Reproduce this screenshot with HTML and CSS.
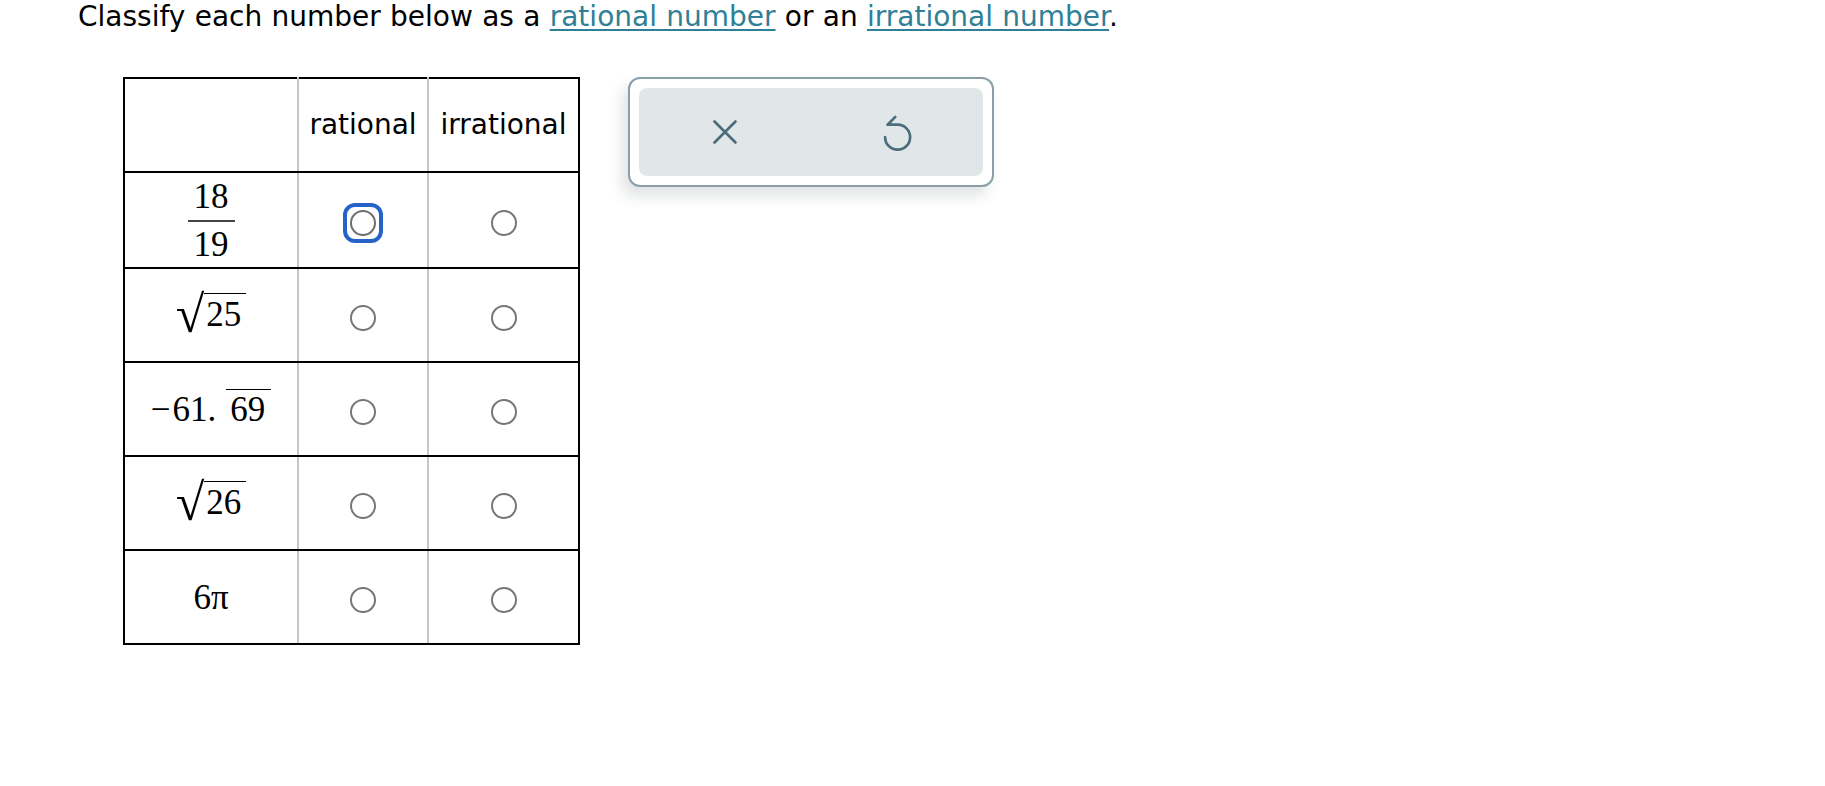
FILE: index.html
```html
<!DOCTYPE html>
<html lang="en">
<head>
    <meta charset="UTF-8">
    <meta name="viewport" content="width=device-width, initial-scale=1.0">
    <title>Rational or irrational</title>
    <link rel="stylesheet" href="styles.css">
</head>
<body>
    <!-- Enunciado -->
    <div class="prompt">
        Classify each number below as a <a href="#">rational number</a> or an <a href="#">irrational number</a>.
    </div>

    <div class="workspace">
        <!-- Tabla de clasificación -->
        <table class="classify">
            <colgroup>
                <col class="col-expr">
                <col class="col-opt">
                <col class="col-opt2">
            </colgroup>
            <tr>
                <th></th>
                <th>rational</th>
                <th>irrational</th>
            </tr>
            <tr class="tall">
                <td class="expr">
                    <span class="math frac">
                        <span class="num">18</span>
                        <span class="den">19</span>
                    </span>
                </td>
                <td><span class="focus-ring"><input type="radio" class="radio" name="q1"></span></td>
                <td><input type="radio" class="radio" name="q1"></td>
            </tr>
            <tr>
                <td class="expr">
                    <span class="math sqrt"><span class="radic">&#8730;</span><span class="radicand">25</span></span>
                </td>
                <td><input type="radio" class="radio" name="q2"></td>
                <td><input type="radio" class="radio" name="q2"></td>
            </tr>
            <tr>
                <td class="expr">
                    <span class="math"><span class="minus">&#8722;</span>61.<span class="rep">69</span></span>
                </td>
                <td><input type="radio" class="radio" name="q3"></td>
                <td><input type="radio" class="radio" name="q3"></td>
            </tr>
            <tr>
                <td class="expr">
                    <span class="math sqrt"><span class="radic">&#8730;</span><span class="radicand">26</span></span>
                </td>
                <td><input type="radio" class="radio" name="q4"></td>
                <td><input type="radio" class="radio" name="q4"></td>
            </tr>
            <tr>
                <td class="expr">
                    <span class="math">6&#960;</span>
                </td>
                <td><input type="radio" class="radio" name="q5"></td>
                <td><input type="radio" class="radio" name="q5"></td>
            </tr>
        </table>

        <!-- Botones de respuesta -->
        <div class="answer-panel">
            <div class="tools">
                <button class="tool" title="Clear">
                    <svg width="26" height="26" viewBox="0 0 26 26">
                        <path d="M2.5 2.5 L23.5 23.5 M23.5 2.5 L2.5 23.5" fill="none" stroke="#4b6d7b" stroke-width="2.7" stroke-linecap="round"/>
                    </svg>
                </button>
                <button class="tool" title="Undo">
                    <svg width="32" height="40" viewBox="0 0 32 40">
                        <path d="M14.3 4.9 L6.6 12.7 L16.6 12.7 A12.5 12.5 0 1 1 4.1 25.2" fill="none" stroke="#4b6d7b" stroke-width="2.7" stroke-linecap="round" stroke-linejoin="round"/>
                    </svg>
                </button>
            </div>
        </div>
    </div>
</body>
</html>
```

FILE: styles.css
```css
body {
    margin: 0;
    padding: 0;
    font-family: "DejaVu Sans", Verdana, sans-serif;
    color: #000;
    background: #fff;
}

/* Enunciado */
.prompt {
    padding: 0 0 0 78px;
    font-size: 28px;
    line-height: 34px;
    word-spacing: 0.4px;
}

.prompt a {
    color: #2f7f97;
    text-decoration: underline;
    text-decoration-thickness: 2px;
    text-underline-offset: 3px;
}

.workspace {
    display: flex;
    align-items: flex-start;
    margin-top: 43px;
    padding-left: 123px;
    gap: 48px;
}

/* Tabla */
.classify {
    border-collapse: collapse;
    table-layout: fixed;
    width: 455px;
}

.col-expr {
    width: 174px;
}

.col-opt {
    width: 130px;
}

.col-opt2 {
    width: 151px;
}

.classify th,
.classify td {
    border: 2px solid #000;
    border-left-color: #c6c6c6;
    border-right-color: #c6c6c6;
    height: 92px;
    padding: 0;
    text-align: center;
    vertical-align: middle;
}

.classify .tall td {
    height: 94px;
}

.classify th {
    font-weight: normal;
    font-size: 28px;
    line-height: 32px;
}

.classify th:first-child,
.classify td:first-child {
    border-left-color: #000;
}

.classify th:last-child,
.classify td:last-child {
    border-right-color: #000;
}

/* Matemáticas */
.math {
    font-family: "Liberation Serif", "Times New Roman", serif;
    font-size: 35px;
    line-height: 1;
    white-space: nowrap;
}

.frac {
    display: inline-flex;
    flex-direction: column;
    align-items: center;
    vertical-align: middle;
}

.frac .num {
    padding: 0 6px 6px;
}

.frac .den {
    align-self: stretch;
    text-align: center;
    border-top: 2px solid #444;
    padding: 5px 6px 0;
}

.radic {
    display: inline-block;
    font-size: 52px;
    line-height: 1;
    vertical-align: -6px;
}

.radicand {
    border-top: 1.6px solid #000;
    padding: 1px 5px 0 2px;
}

.minus {
    margin-right: 2px;
}

.rep {
    border-top: 1.6px solid #000;
    margin-left: 10px;
    padding: 0 6px 0 4px;
}

/* Botones de opción */
.radio {
    appearance: none;
    -webkit-appearance: none;
    display: block;
    width: 26px;
    height: 26px;
    margin: 6px auto 0;
    border: 2px solid #777;
    border-radius: 50%;
    background: #fff;
}

.focus-ring {
    display: inline-block;
    width: 40px;
    height: 40px;
    box-sizing: border-box;
    border: 4px solid #2563c9;
    border-radius: 12px;
    padding: 3px;
    margin-top: 6px;
    vertical-align: middle;
}

.focus-ring .radio {
    margin: 0;
    border-color: #6e6e6e;
}

/* Panel de respuesta */
.answer-panel {
    border: 2px solid #8a9ea8;
    border-radius: 12px;
    padding: 9px;
    background: #fff;
    box-shadow: -6px 9px 14px rgba(60, 80, 90, 0.16);
}

.tools {
    display: flex;
    width: 344px;
    height: 88px;
    background-color: #e1e6e9;
    border-radius: 8px;
}

.tool {
    flex: 1;
    display: flex;
    align-items: center;
    justify-content: center;
    background: none;
    border: none;
    padding: 0;
    cursor: pointer;
}
```
